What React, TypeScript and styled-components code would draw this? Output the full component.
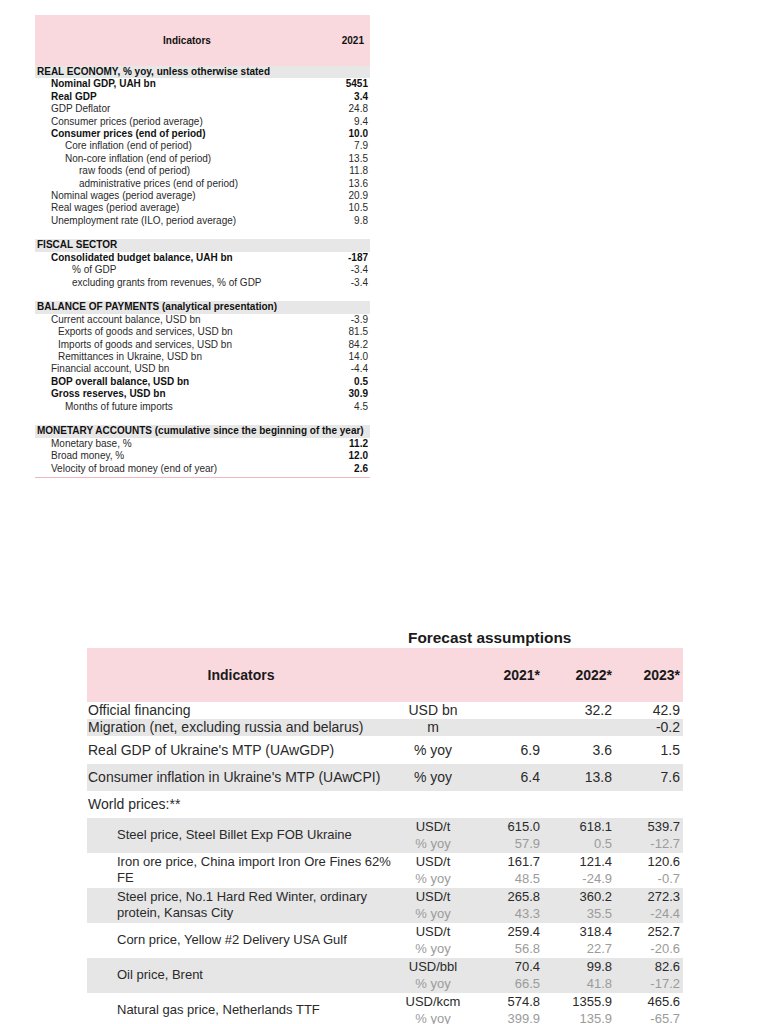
import React from "react";
import styled, { createGlobalStyle } from "styled-components";

const Global = createGlobalStyle`
  html, body { margin: 0; padding: 0; background: #ffffff; }
  body { font-family: "Liberation Sans", Arial, sans-serif; color: #1c1c1c; }
`;

const Page = styled.div`
  width: 768px;
  height: 1024px;
  overflow: hidden;
  padding-top: 15px;
  box-sizing: border-box;
`;

/* ---------- Summary table (top) ---------- */

const Summary = styled.section`
  margin-left: 35px;
  width: 335px;
  font-size: 10px;
`;

const SummaryHead = styled.div`
  display: grid;
  grid-template-columns: 304px 1fr;
  align-items: center;
  height: 51px;
  background: #f9d9de;
  font-weight: 700;
  color: #111;
`;

const HeadLabel = styled.div`
  text-align: center;
`;

const HeadYear = styled.div`
  text-align: right;
  padding-right: 6px;
`;

const SRowBox = styled.div<{ $section?: boolean }>`
  display: grid;
  grid-template-columns: 1fr auto;
  height: 12.4px;
  line-height: 12.4px;
  white-space: nowrap;
  background: ${(p) => (p.$section ? "#e7e7e7" : "transparent")};
`;

const SLabel = styled.div<{ $indent: number; $bold?: boolean }>`
  padding-left: ${(p) => p.$indent}px;
  font-weight: ${(p) => (p.$bold ? 700 : 400)};
  color: ${(p) => (p.$bold ? "#111" : "#2a2a2a")};
`;

const SValue = styled.div<{ $bold?: boolean }>`
  text-align: right;
  padding-right: 2px;
  font-weight: ${(p) => (p.$bold ? 700 : 400)};
  color: ${(p) => (p.$bold ? "#111" : "#2a2a2a")};
`;

const SummaryEnd = styled.div`
  margin-top: 2px;
  border-top: 1px solid #f2b8c0;
`;

/* ---------- Forecast table (bottom) ---------- */

const Forecast = styled.section`
  margin-top: 150px;
  margin-left: 87px;
  width: 596px;
  color: #2a2a2a;
`;

const Title = styled.h2`
  margin: 0;
  padding-left: 321px;
  height: 20px;
  line-height: 20px;
  font-size: 15.4px;
  font-weight: 700;
  color: #1a1a1a;
  white-space: nowrap;
`;

const cols = "308px 76px 69px 72px 68px";

const FHead = styled.div`
  display: grid;
  grid-template-columns: ${cols};
  padding-right: 3px;
  height: 54px;
  align-items: center;
  background: #f9d9de;
  font-size: 14px;
  font-weight: 700;
  color: #1a1a1a;
`;

const FHeadLabel = styled.div`
  text-align: center;
`;

const FRow = styled.div<{ $shade?: boolean; $h: number }>`
  display: grid;
  grid-template-columns: ${cols};
  padding-right: 3px;
  height: ${(p) => p.$h}px;
  align-items: center;
  background: ${(p) => (p.$shade ? "#e6e6e6" : "transparent")};
  font-size: 14px;
  white-space: nowrap;
`;

const FLabel = styled.div`
  padding-left: 1px;
`;

const FUnit = styled.div`
  text-align: center;
`;

const FNum = styled.div`
  text-align: right;
`;

const ItemRow = styled.div<{ $shade?: boolean }>`
  display: grid;
  grid-template-columns: ${cols};
  padding-right: 3px;
  height: 35px;
  align-items: center;
  background: ${(p) => (p.$shade ? "#e6e6e6" : "transparent")};
  font-size: 13px;
`;

const ItemLabel = styled.div`
  padding-left: 30px;
  line-height: 16px;
`;

const Pair = styled.div<{ $align: "center" | "right" }>`
  display: flex;
  flex-direction: column;
  text-align: ${(p) => p.$align};
  white-space: nowrap;
`;

const Line = styled.span<{ $muted?: boolean }>`
  display: block;
  height: 17.5px;
  line-height: 17.5px;
  color: ${(p) => (p.$muted ? "#9b9b9b" : "#2a2a2a")};
`;

type SItem =
  | { kind: "section"; label: string }
  | { kind: "blank" }
  | {
      kind: "row";
      label: string;
      value: string;
      indent: number;
      bold?: boolean;
      boldValue?: boolean;
    };

const summary: SItem[] = [
  { kind: "section", label: "REAL ECONOMY, % yoy, unless otherwise stated" },
  { kind: "row", label: "Nominal GDP, UAH bn", value: "5451", indent: 16, bold: true },
  { kind: "row", label: "Real GDP", value: "3.4", indent: 16, bold: true },
  { kind: "row", label: "GDP Deflator", value: "24.8", indent: 16 },
  { kind: "row", label: "Consumer prices (period average)", value: "9.4", indent: 16 },
  { kind: "row", label: "Consumer prices (end of period)", value: "10.0", indent: 16, bold: true },
  { kind: "row", label: "Core inflation (end of period)", value: "7.9", indent: 30 },
  { kind: "row", label: "Non-core inflation (end of period)", value: "13.5", indent: 30 },
  { kind: "row", label: "raw foods (end of period)", value: "11.8", indent: 44 },
  { kind: "row", label: "administrative prices (end of period)", value: "13.6", indent: 44 },
  { kind: "row", label: "Nominal wages (period average)", value: "20.9", indent: 16 },
  { kind: "row", label: "Real wages (period average)", value: "10.5", indent: 16 },
  { kind: "row", label: "Unemployment rate (ILO, period average)", value: "9.8", indent: 16 },
  { kind: "blank" },
  { kind: "section", label: "FISCAL SECTOR" },
  { kind: "row", label: "Consolidated budget balance, UAH bn", value: "-187", indent: 16, bold: true },
  { kind: "row", label: "% of GDP", value: "-3.4", indent: 37 },
  { kind: "row", label: "excluding grants from revenues, % of GDP", value: "-3.4", indent: 37 },
  { kind: "blank" },
  { kind: "section", label: "BALANCE OF PAYMENTS (analytical presentation)" },
  { kind: "row", label: "Current account balance, USD bn", value: "-3.9", indent: 16 },
  { kind: "row", label: "Exports of goods and services, USD bn", value: "81.5", indent: 23 },
  { kind: "row", label: "Imports of goods and services, USD bn", value: "84.2", indent: 23 },
  { kind: "row", label: "Remittances in Ukraine, USD bn", value: "14.0", indent: 23 },
  { kind: "row", label: "Financial account, USD bn", value: "-4.4", indent: 16 },
  { kind: "row", label: "BOP overall balance, USD bn", value: "0.5", indent: 16, bold: true },
  { kind: "row", label: "Gross reserves, USD bn", value: "30.9", indent: 16, bold: true },
  { kind: "row", label: "Months of future imports", value: "4.5", indent: 30 },
  { kind: "blank" },
  { kind: "section", label: "MONETARY ACCOUNTS (cumulative since the beginning of the year)" },
  { kind: "row", label: "Monetary base, %", value: "11.2", indent: 16, boldValue: true },
  { kind: "row", label: "Broad money, %", value: "12.0", indent: 16, boldValue: true },
  { kind: "row", label: "Velocity of broad money (end of year)", value: "2.6", indent: 16, boldValue: true },
];

type FTop = { label: string; unit: string; v: [string, string, string]; h: number; shade?: boolean };

const topRows: FTop[] = [
  { label: "Official financing", unit: "USD bn", v: ["", "32.2", "42.9"], h: 17 },
  { label: "Migration (net, excluding russia and belarus)", unit: "m", v: ["", "", "-0.2"], h: 17, shade: true },
  { label: "Real GDP of Ukraine's MTP (UAwGDP)", unit: "% yoy", v: ["6.9", "3.6", "1.5"], h: 28 },
  { label: "Consumer inflation in Ukraine's MTP (UAwCPI)", unit: "% yoy", v: ["6.4", "13.8", "7.6"], h: 27, shade: true },
];

type FItem = { label: string; unit: string; price: [string, string, string]; yoy: [string, string, string] };

const items: FItem[] = [
  { label: "Steel price, Steel Billet Exp FOB Ukraine", unit: "USD/t", price: ["615.0", "618.1", "539.7"], yoy: ["57.9", "0.5", "-12.7"] },
  { label: "Iron ore price, China import Iron Ore Fines 62% FE", unit: "USD/t", price: ["161.7", "121.4", "120.6"], yoy: ["48.5", "-24.9", "-0.7"] },
  { label: "Steel price, No.1 Hard Red Winter, ordinary protein, Kansas City", unit: "USD/t", price: ["265.8", "360.2", "272.3"], yoy: ["43.3", "35.5", "-24.4"] },
  { label: "Corn price, Yellow #2 Delivery USA Gulf", unit: "USD/t", price: ["259.4", "318.4", "252.7"], yoy: ["56.8", "22.7", "-20.6"] },
  { label: "Oil price, Brent", unit: "USD/bbl", price: ["70.4", "99.8", "82.6"], yoy: ["66.5", "41.8", "-17.2"] },
  { label: "Natural gas price, Netherlands TTF", unit: "USD/kcm", price: ["574.8", "1355.9", "465.6"], yoy: ["399.9", "135.9", "-65.7"] },
];

export default function App() {
  return (
    <Page>
      <Global />
      <Summary>
        <SummaryHead>
          <HeadLabel>Indicators</HeadLabel>
          <HeadYear>2021</HeadYear>
        </SummaryHead>
        {summary.map((r, i) => {
          if (r.kind === "blank") return <SRowBox key={i} />;
          if (r.kind === "section")
            return (
              <SRowBox key={i} $section>
                <SLabel $indent={2} $bold>
                  {r.label}
                </SLabel>
              </SRowBox>
            );
          return (
            <SRowBox key={i}>
              <SLabel $indent={r.indent} $bold={r.bold}>
                {r.label}
              </SLabel>
              <SValue $bold={r.bold || r.boldValue}>{r.value}</SValue>
            </SRowBox>
          );
        })}
        <SummaryEnd />
      </Summary>

      <Forecast>
        <Title>Forecast assumptions</Title>
        <FHead>
          <FHeadLabel>Indicators</FHeadLabel>
          <div />
          <FNum>2021*</FNum>
          <FNum>2022*</FNum>
          <FNum>2023*</FNum>
        </FHead>
        {topRows.map((r) => (
          <FRow key={r.label} $h={r.h} $shade={r.shade}>
            <FLabel>{r.label}</FLabel>
            <FUnit>{r.unit}</FUnit>
            {r.v.map((v, j) => (
              <FNum key={j}>{v}</FNum>
            ))}
          </FRow>
        ))}
        <FRow $h={27}>
          <FLabel>World prices:**</FLabel>
        </FRow>
        {items.map((it, i) => (
          <ItemRow key={it.label} $shade={i % 2 === 0}>
            <ItemLabel>{it.label}</ItemLabel>
            <Pair $align="center">
              <Line>{it.unit}</Line>
              <Line $muted>% yoy</Line>
            </Pair>
            {it.price.map((p, j) => (
              <Pair key={j} $align="right">
                <Line>{p}</Line>
                <Line $muted>{it.yoy[j]}</Line>
              </Pair>
            ))}
          </ItemRow>
        ))}
      </Forecast>
    </Page>
  );
}
